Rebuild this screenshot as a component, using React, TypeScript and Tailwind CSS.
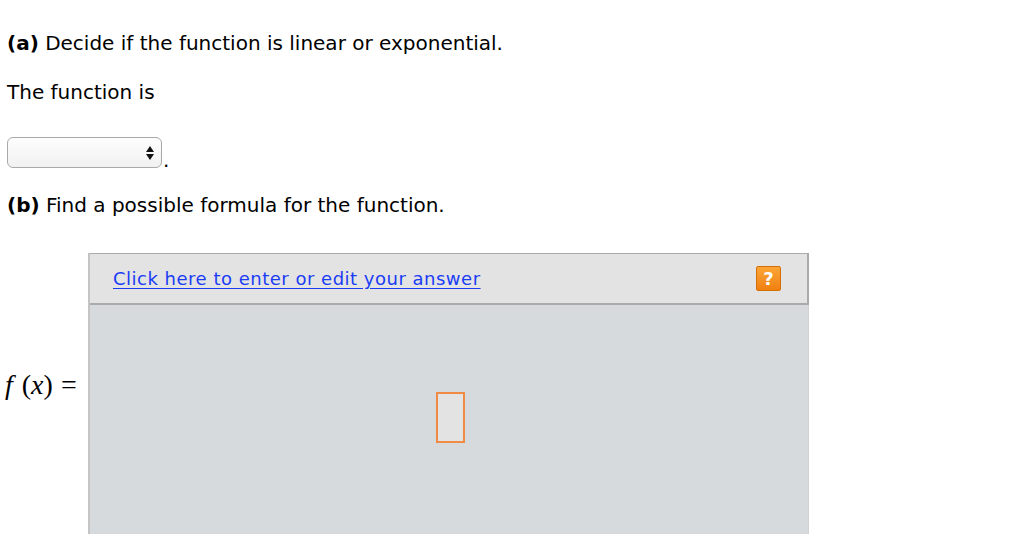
import React from "react";

export default function App() {
  return (
    <div className="relative w-[1024px] h-[556px] bg-white overflow-hidden text-black" style={{ fontFamily: '"DejaVu Sans", Verdana, sans-serif' }}>
      <div className="pl-[7px] pt-[31px]">
        <p className="text-[20px] leading-[24px]"><span className="font-bold">(a)</span> Decide if the function is linear or exponential.</p>
        <p className="mt-[25px] text-[20px] leading-[24px]">The function is</p>
        <div className="mt-[33px] flex items-end">
          <div className="w-[155px] h-[31px] rounded-[6px] border border-[#a9a9a9] bg-gradient-to-b from-[#fdfdfd] to-[#f1f1f1] flex items-center justify-end pr-[7px]">
            <svg width="8" height="14" viewBox="0 0 8 14">
              <path d="M4 0 L8 6 L0 6 Z" fill="#111" />
              <path d="M0 8 L8 8 L4 14 Z" fill="#111" />
            </svg>
          </div>
          <span className="text-[20px] leading-[18px] ml-[1px] -mb-[1px]">.</span>
        </div>
        <p className="mt-[25px] text-[20px] leading-[24px]"><span className="font-bold">(b)</span> Find a possible formula for the function.</p>
      </div>
      <div className="flex mt-[36px]">
        <div className="w-[88px] shrink-0 flex items-start pt-[115px] pl-[5px]">
          <span className="text-[28px] leading-[34px] whitespace-nowrap" style={{ fontFamily: '"Liberation Serif", "Times New Roman", serif' }}>
            <i className="mr-[9px]">f</i>(<i>x</i>)<span className="ml-[8px]">=</span>
          </span>
        </div>
        <div className="w-[721px] h-[281px] border-l-2 border-[#c4c4c4] flex flex-col">
          <div className="h-[52px] bg-[#e3e3e3] border-t border-r-2 border-b-2 border-[#aaaaaa] flex items-center justify-between pl-[23px] pr-[26px]">
            <span className="text-[18px] text-[#1a3cf5] underline underline-offset-[3px] tracking-[0.5px]" style={{ fontFamily: '"DejaVu Sans", Verdana, sans-serif' }}>Click here to enter or edit your answer</span>
            <div className="w-[25px] h-[25px] rounded-[2px] bg-gradient-to-b from-[#fba535] to-[#f0800d] border border-[#d46f08] flex items-center justify-center">
              <span className="text-white font-bold text-[18px] leading-none" style={{ fontFamily: '"DejaVu Sans", sans-serif' }}>?</span>
            </div>
          </div>
          <div className="flex-1 bg-[#d7dadd] border-r border-[#d0d3d6] flex justify-center pt-[87px]">
            <div className="ml-[3px] w-[29px] h-[51px] border-2 border-[#f08b45] bg-[#e3e3e3]" />
          </div>
        </div>
      </div>
    </div>
  );
}
